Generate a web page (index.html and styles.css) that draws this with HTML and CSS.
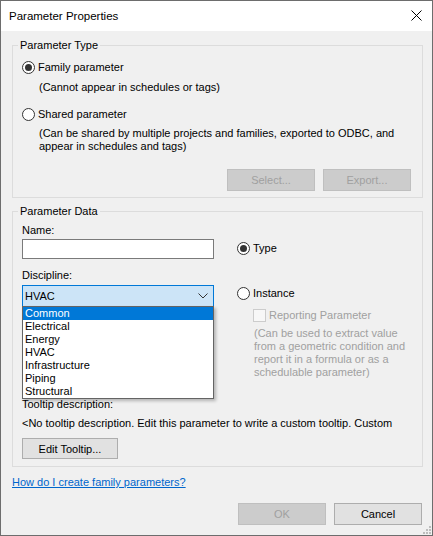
FILE: index.html
```html
<!DOCTYPE html>
<html>
    <head>
        <title>Parameter Properties</title>
        <link rel="stylesheet" href="styles.css">
    </head>
    <body>
        <div class="window">
            <div class="titlebar">
                <span class="title">Parameter Properties</span>
                <span class="close">
                    <svg width="11" height="11" viewBox="0 0 11 11">
                        <path d="M0.5 0.5 L10.5 10.5 M10.5 0.5 L0.5 10.5" stroke="#000" stroke-width="1" fill="none"/>
                    </svg>
                </span>
            </div>

            <div class="content">
                <fieldset class="group">
                    <legend>Parameter Type</legend>
                    <div class="group-body type-body">
                        <div class="radio radio-family checked"><span class="mark"></span>Family parameter</div>
                        <div class="note note-family">(Cannot appear in schedules or tags)</div>
                        <div class="radio radio-shared"><span class="mark"></span>Shared parameter</div>
                        <div class="note note-shared">(Can be shared by multiple projects and families, exported to ODBC, and<br>appear in schedules and tags)</div>
                        <div class="group-buttons">
                            <button class="btn" disabled>Select...</button>
                            <button class="btn" disabled>Export...</button>
                        </div>
                    </div>
                </fieldset>

                <fieldset class="group data-group">
                    <legend>Parameter Data</legend>
                    <div class="group-body data-body">
                        <div class="data-grid">
                            <div class="data-left">
                                <div class="label label-name">Name:</div>
                                <input class="textbox" type="text">
                                <div class="label label-discipline">Discipline:</div>
                                <div class="combo">
                                    <span class="combo-value">HVAC</span>
                                    <svg class="chevron" width="10" height="6" viewBox="0 0 10 6">
                                        <polyline points="0.5,0.5 5,5 9.5,0.5" stroke="#333" stroke-width="1" fill="none"/>
                                    </svg>
                                    <ul class="combo-list">
                                        <li class="selected">Common</li>
                                        <li>Electrical</li>
                                        <li>Energy</li>
                                        <li>HVAC</li>
                                        <li>Infrastructure</li>
                                        <li>Piping</li>
                                        <li>Structural</li>
                                    </ul>
                                </div>
                            </div>
                            <div class="data-right">
                                <div class="radio radio-type checked"><span class="mark"></span>Type</div>
                                <div class="radio radio-instance"><span class="mark"></span>Instance</div>
                                <div class="check disabled"><span class="box"></span>Reporting Parameter</div>
                                <div class="hint">(Can be used to extract value<br>from a geometric condition and<br>report it in a formula or as a<br>schedulable parameter)</div>
                            </div>
                        </div>
                        <div class="label label-tooltip">Tooltip description:</div>
                        <div class="tooltip-text">&lt;No tooltip description. Edit this parameter to write a custom tooltip. Custom</div>
                        <button class="btn btn-edit">Edit Tooltip...</button>
                    </div>
                </fieldset>

                <a class="help-link" href="#">How do I create family parameters?</a>

                <div class="footer">
                    <button class="btn" disabled>OK</button>
                    <button class="btn">Cancel</button>
                </div>
            </div>
            <svg class="grip" width="8" height="8" viewBox="0 0 8 8">
                <g fill="#bdbdbd">
                    <rect x="6" y="0" width="2" height="2"/>
                    <rect x="3" y="3" width="2" height="2"/>
                    <rect x="6" y="3" width="2" height="2"/>
                    <rect x="0" y="6" width="2" height="2"/>
                    <rect x="3" y="6" width="2" height="2"/>
                    <rect x="6" y="6" width="2" height="2"/>
                </g>
            </svg>
        </div>
    </body>
</html>
```

FILE: styles.css
```css
body {
    margin: 0;
    font-family: "Liberation Sans", Arial, sans-serif;
    font-size: 11px;
    color: #000;
    background: #fff;
}

.window {
    position: relative;
    width: 433px;
    height: 536px;
    box-sizing: border-box;
    border: 1px solid #6d6d6d;
    background: #f0f0f0;
    display: flex;
    flex-direction: column;
}

.titlebar {
    height: 30px;
    background: #fff;
    display: flex;
    align-items: center;
    justify-content: space-between;
    padding: 0 10px 0 8px;
}
.title { line-height: 30px; font-size: 11.5px; }
.close { display: flex; margin-top: -1px; }

.content {
    padding: 7px 9px 0 11px;
}

/* group boxes */
.group {
    margin: 0;
    padding: 0;
    min-width: 0;
    border: 1px solid #dcdcdc;
}
.group legend {
    margin-left: 5px;
    padding: 0 2px;
    line-height: 15px;
}
.group-body { padding: 0 11px 0 9px; }
.type-body { padding-bottom: 6px; }
.data-group { margin-top: 6px; }
.data-body { padding-bottom: 7px; }

/* radio buttons and check box */
.radio, .check {
    display: flex;
    align-items: center;
    height: 14px;
    line-height: 14px;
    white-space: nowrap;
}
.radio .mark {
    width: 11px;
    height: 11px;
    border: 1px solid #333;
    border-radius: 50%;
    background: #fff;
    margin-right: 3px;
    position: relative;
}
.radio.checked .mark::after {
    content: "";
    position: absolute;
    left: 2px;
    top: 2px;
    width: 7px;
    height: 7px;
    border-radius: 50%;
    background: #333;
}
.check .box {
    width: 11px;
    height: 11px;
    border: 1px solid #cccccc;
    background: #f7f7f7;
    margin-right: 3px;
}
.check.disabled, .hint { color: #a0a0a0; }

.note, .hint, .label {
    line-height: 13px;
    white-space: nowrap;
}
.radio-family { margin-top: 7px; }
.note { padding-left: 17px; }
.note-family { margin-top: 7px; }
.radio-shared { margin-top: 13px; }
.note-shared { margin-top: 6px; }

.group-buttons {
    display: flex;
    justify-content: flex-end;
    gap: 8px;
    margin-top: 16px;
}

/* buttons */
.btn {
    width: 88px;
    height: 22px;
    padding: 0;
    font: inherit;
    color: #000;
    background: #e1e1e1;
    border: 1px solid #adadad;
}
.btn:disabled {
    color: #a0a0a0;
    background: #cccccc;
    border-color: #bfbfbf;
}

/* parameter data */
.data-grid {
    display: grid;
    grid-template-columns: 192px 1fr;
    column-gap: 23px;
}
.label-name { margin-top: 5px; }
.textbox {
    display: block;
    box-sizing: border-box;
    width: 192px;
    height: 20px;
    margin: 2px 0 0;
    border: 1px solid #7a7a7a;
    background: #fff;
}
.label-discipline { margin-top: 10px; }

.combo {
    position: relative;
    box-sizing: border-box;
    height: 22px;
    margin-top: 3px;
    border: 1px solid #0078d7;
    background: #cce4f7;
    display: flex;
    align-items: center;
    justify-content: space-between;
    padding: 0 5px 0 2px;
}
.combo-list {
    position: absolute;
    left: -1px;
    top: 20px;
    width: 192px;
    box-sizing: border-box;
    margin: 0;
    padding: 0;
    list-style: none;
    background: #fff;
    border: 1px solid #646464;
    box-shadow: 2px 2px 3px rgba(0, 0, 0, 0.25);
    z-index: 2;
}
.combo-list li {
    height: 13px;
    line-height: 13px;
    padding-left: 2px;
}
.combo-list li.selected {
    background: #0078d7;
    color: #fff;
}

.radio-type { margin-top: 22px; }
.radio-instance { margin-top: 31px; }
.check { margin: 8px 0 0 16px; }
.hint { margin: 5px 0 0 17px; }

.label-tooltip { margin-top: 19px; }
.tooltip-text {
    margin-top: 6px;
    line-height: 13px;
    white-space: nowrap;
}
.btn-edit {
    display: block;
    width: 96px;
    height: 21px;
    margin-top: 8px;
}

.help-link {
    display: inline-block;
    margin-top: 8px;
    line-height: 14px;
    color: #0066cc;
    text-decoration: underline;
}

.footer {
    display: flex;
    justify-content: flex-end;
    gap: 8px;
    margin: 14px 1px 0 0;
}

/* resize grip in the corner */
.grip {
    position: absolute;
    right: 1px;
    bottom: 1px;
}
```
